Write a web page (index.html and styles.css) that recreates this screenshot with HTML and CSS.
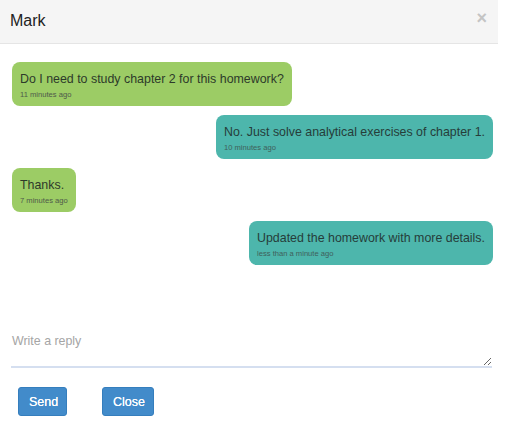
FILE: index.html
```html
<!DOCTYPE html>
<html>
<head>
<meta charset="utf-8">
<link rel="stylesheet" href="styles.css">
</head>
<body>
<div class="modal">
  <div class="header">
    <span class="title">Mark</span>
    <span class="close-x">&times;</span>
  </div>
  <div class="messages">
    <div class="msg in">
      <div class="text">Do I need to study chapter 2 for this homework?</div>
      <div class="time">11 minutes ago</div>
    </div>
    <div class="msg out">
      <div class="text">No. Just solve analytical exercises of chapter 1.</div>
      <div class="time">10 minutes ago</div>
    </div>
    <div class="msg in">
      <div class="text">Thanks.</div>
      <div class="time">7 minutes ago</div>
    </div>
    <div class="msg out">
      <div class="text">Updated the homework with more details.</div>
      <div class="time">less than a minute ago</div>
    </div>
  </div>
  <div class="reply">
    <textarea class="reply-box" placeholder="Write a reply"></textarea>
  </div>
  <div class="actions">
    <button class="btn">Send</button>
    <button class="btn">Close</button>
  </div>
</div>
</body>
</html>
```
FILE: styles.css
```css
* { box-sizing: border-box; }
html, body { margin: 0; padding: 0; background: #fff; }
body { font-family: "Liberation Sans", Arial, sans-serif; color: #333; }
.modal { width: 498px; }
.header {
  height: 44px;
  background: #f5f5f5;
  border-bottom: 1px solid #e5e5e5;
  display: flex;
  align-items: center;
  justify-content: space-between;
  padding: 0 10px 2px 10px;
}
.title { font-size: 16px; color: #222; }
.close-x { font-size: 18px; font-weight: bold; color: #c4c4c4; line-height: 1; margin-top: -6px; margin-right: 1px; }
.messages {
  display: flex;
  flex-direction: column;
  align-items: flex-start;
  gap: 9px;
  padding: 18px 5px 0 12px;
}
.msg {
  border-radius: 8px;
  padding: 8px 8px 5px 8px;
  min-height: 44px;
}
.msg.in { background: #9ccc65; }
.msg.out { background: #4db6ac; align-self: flex-end; }
.text { font-size: 12.4px; line-height: 19px; color: #2d3a2a; }
.msg.out .text { color: #263d3a; }
.time { font-size: 7.6px; line-height: 12px; color: #4f5a4a; }
.msg.out .time { color: #3f5f5b; }
.reply { padding: 65px 6px 0 11px; }
.reply-box {
  display: block;
  width: 481px;
  height: 38px;
  border: none;
  border-bottom: 2px solid #d5dff0;
  padding: 4px 1px;
  font-family: "Liberation Sans", Arial, sans-serif;
  font-size: 12.4px;
  color: #333;
  outline: none;
  resize: vertical;
}
.reply-box::placeholder { color: #a5a5a5; }
.actions {
  display: flex;
  gap: 35px;
  padding: 19px 0 0 18px;
}
.btn {
  height: 29px;
  padding: 0 10px;
  background: #428bca;
  border: 1px solid #357ebd;
  border-radius: 3px;
  color: #fff;
  font-family: "Liberation Sans", Arial, sans-serif;
  font-size: 12.5px;
  font-weight: normal;
  text-shadow: 0 0 0.4px #fff;
}
.btn:first-child { width: 49px; }
.btn:last-child { width: 52px; }
```
